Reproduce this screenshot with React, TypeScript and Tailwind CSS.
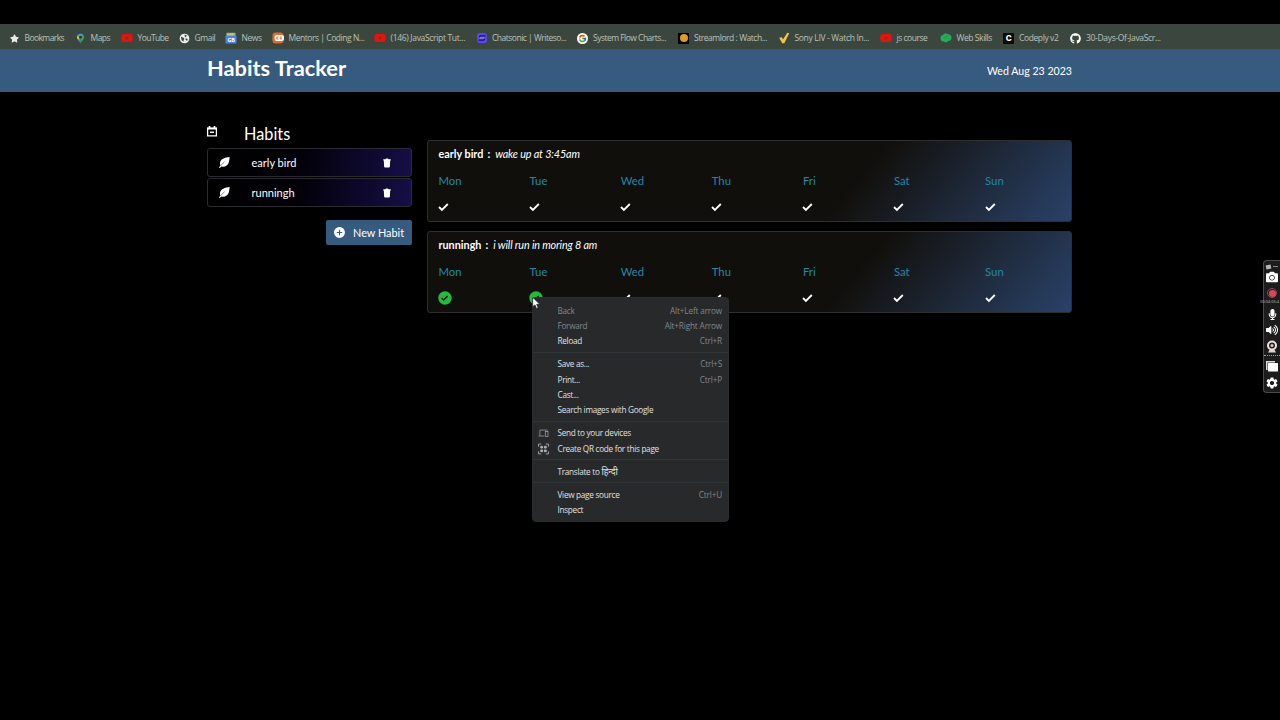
import type { ReactNode } from "react";
import { BiSolidCheckCircle, BiSolidPlusCircle } from "react-icons/bi";
import { FaGithub, FaStar, FaYoutube, FaCamera, FaMicrophone, FaVolumeUp } from "react-icons/fa";
import { FcGoogle } from "react-icons/fc";
import { MdSettings } from "react-icons/md";

const DAYS = ["Mon", "Tue", "Wed", "Thu", "Fri", "Sat", "Sun"];

const YT = <FaYoutube className="text-[#e8120c] text-[12px]" />;

const Globe = () => (
  <svg viewBox="0 0 12 12" className="w-[11px] h-[11px]">
    <circle cx="6" cy="6" r="5.3" fill="#eceeec" />
    <path d="M2 4 4.500 4.800 6 6.500 5 7.500 5 9.500 2.800 8zM6 2 8.500 2.400 8 3.800 6.600 4.500z M7 6 9.500 6.300 9 8.500 7.500 8z" fill="#3b473e" />
  </svg>
);

const MapsPin = () => (
  <svg viewBox="0 0 12 12" className="w-[11px] h-[11px]">
    <path d="M6 .8C3.700.8 2 2.500 2 4.700c0 2.600 2.600 3.600 4 6.700z" fill="#3d8be8" />
    <path d="M6 .8c2.300 0 4 1.700 4 3.900 0 2.600-2.700 3.700-4 6.700z" fill="#34a853" />
    <path d="M2.600 2.600 5 5 3.600 7.400 2.200 5.400z" fill="#fbbc04" />
    <path d="M6 .8 8.900 2 6 5 3 2.300z" fill="#5a93d8" />
    <circle cx="6" cy="4.600" r="1.500" fill="#26352c" />
  </svg>
);

const News = () => (
  <svg viewBox="0 0 12 12" className="w-[12px] h-[12px]">
    <rect x="1.500" y=".8" width="9" height="4" rx=".5" fill="#7cb7a4" />
    <path d="M2 2.300 8 1l2 3H2z" fill="#d8c06c" />
    <rect x=".5" y="3.500" width="11" height="8" rx=".8" fill="#4a84e4" />
    <text x="6" y="9.600" fontSize="5.500" fontWeight="700" textAnchor="middle" fill="#fff">GB</text>
  </svg>
);

const Ninjas = () => (
  <svg viewBox="0 0 12 12" className="w-[12px] h-[12px]">
    <rect x=".5" y=".5" width="11" height="11" rx="3" fill="#de6a2c" />
    <rect x="2.600" y="3" width="9.400" height="6" rx="2" fill="#fff" />
    <path d="M6.600 5H4.800v2h1.800M10 5H8.200v2H10" stroke="#de6a2c" strokeWidth=".9" fill="none" />
  </svg>
);

const Chatsonic = () => (
  <svg viewBox="0 0 12 12" className="w-[12px] h-[12px]">
    <rect x="1" y="1" width="10" height="10" rx="2.800" fill="#5b45f2" />
    <path d="M9.500 3.800H4.600c-1.400 0-1.400 2.200 0 2.200h2.800c1.400 0 1.400 2.200 0 2.200H2.500" stroke="#171455" strokeWidth="1.300" fill="none" />
    <path d="M3.500 6h5" stroke="#d8ccff" strokeWidth="1" />
  </svg>
);

const Google = () => (
  <span className="flex w-[11px] h-[11px] items-center justify-center rounded-full bg-white">
    <FcGoogle className="text-[9px]" />
  </span>
);

const Streamlord = () => (
  <span className="flex w-[11px] h-[11px] items-center justify-center bg-black">
    <span className="h-[8px] w-[8px] rounded-full bg-[#e0992f]" />
  </span>
);

const SonyLiv = () => (
  <svg viewBox="0 0 12 12" className="w-[12px] h-[12px]">
    <path d="M1.200 5.800 3.900 5.300 5 7.400 9.300.8 11.200 1.200 6.300 11.300H4.200z" fill="#f3c34a" />
  </svg>
);

const WebSkills = () => (
  <svg viewBox="0 0 12 12" className="w-[12px] h-[12px]">
    <path d="M3 2.900C4.500 1.200 7 1.400 8 2.300c2 0 3.600 1.600 3.500 3.500 0 2-1.400 3.300-3.300 3.300C7 10.700 4.700 10.600 3.700 9.500 1.500 9.500.4 8.200.5 6.200.5 4.400 1.400 3.200 3 2.900z" fill="#25ad58" />
    <path d="M3 5.500h3v2M6 3v1.500h3M8 6.500h2" stroke="#1d8b49" strokeWidth=".5" fill="none" />
  </svg>
);

const Codeply = () => (
  <span className="flex w-[11px] h-[11px] items-center justify-center bg-[#0b0b0b] font-['Inter',sans-serif] text-[8px] font-extrabold leading-none text-white">C</span>
);

type Bookmark = { label: string; icon: ReactNode; width: string; tracking: string };

const BOOKMARKS: Bookmark[] = [
  { label: "Bookmarks", icon: <FaStar className="text-[9px] text-[#e9ece9]" />, width: "w-[66px]", tracking: "tracking-[-0.58px]" },
  { label: "Maps", icon: <MapsPin />, width: "w-[47px]", tracking: "tracking-[-0.5px]" },
  { label: "YouTube", icon: YT, width: "w-[57px]", tracking: "tracking-[-0.55px]" },
  { label: "Gmail", icon: <Globe />, width: "w-[47px]", tracking: "tracking-[-0.45px]" },
  { label: "News", icon: <News />, width: "w-[47px]", tracking: "tracking-[-0.4px]" },
  { label: "Mentors | Coding N...", icon: <Ninjas />, width: "w-[102px]", tracking: "tracking-[-0.46px]" },
  { label: "(146) JavaScript Tut...", icon: YT, width: "w-[101.500px]", tracking: "tracking-[-0.33px]" },
  { label: "Chatsonic | Writeso...", icon: <Chatsonic />, width: "w-[101px]", tracking: "tracking-[-0.5px]" },
  { label: "System Flow Charts...", icon: <Google />, width: "w-[101px]", tracking: "tracking-[-0.52px]" },
  { label: "Streamlord : Watch...", icon: <Streamlord />, width: "w-[100.500px]", tracking: "tracking-[-0.46px]" },
  { label: "Sony LIV - Watch In...", icon: <SonyLiv />, width: "w-[102px]", tracking: "tracking-[-0.33px]" },
  { label: "js course", icon: YT, width: "w-[60px]", tracking: "tracking-[-0.48px]" },
  { label: "Web Skills", icon: <WebSkills />, width: "w-[62.500px]", tracking: "tracking-[-0.42px]" },
  { label: "Codeply v2", icon: <Codeply />, width: "w-[67px]", tracking: "tracking-[-0.4px]" },
  { label: "30-Days-Of-JavaScr...", icon: <FaGithub className="text-[11px] text-white" />, width: "w-[110px]", tracking: "tracking-[-0.32px]" },
];

const HABITS = [
  { name: "early bird", note: "wake up at 3:45am", done: [] as string[] },
  { name: "runningh", note: "i will run in moring 8 am", done: ["Mon", "Tue"] },
];

const CalendarIcon = () => (
  <svg viewBox="0 0 12 13" className="w-[12px] h-[13px]" fill="none" stroke="#fff">
    <path d="M1.600 3.200h8.800v7.600H1.600z" strokeWidth="1.300" />
    <path d="M1 3.600h10M3.500 1v2M8.500 1v2" strokeWidth="1.700" />
    <path d="M4 7.300h4" strokeWidth="1.500" />
  </svg>
);

const LeafIcon = () => (
  <svg viewBox="0 0 13 13" className="w-[13px] h-[13px]">
    <path d="M11.700 1C7.500 1.200 3.400 3 2.300 5.600 1.700 7.200 1.900 8.600 2.500 9.500L.9 11.600l.9.400 1.500-1.500c3.500.9 6.500-.9 7.500-4 .5-1.800.6-3.700.9-5.500z" fill="#fff" />
    <path d="M2.700 9.600 6.500 5.800" stroke="#08070c" strokeWidth=".5" />
  </svg>
);

const TrashIcon = () => (
  <svg viewBox="0 0 9 11" className="w-[8px] h-[10px]" fill="#fff">
    <path d="M.3 1.300H2.800L3.400.4H5.600L6.200 1.300H8.700V2.800H.3zM.9 2.800H8.100L7.700 9.600Q7.600 10.500 6.700 10.500H2.300Q1.400 10.500 1.300 9.600z" />
  </svg>
);

const CheckIcon = () => (
  <svg viewBox="0 0 11 10" className="-ml-[0.500px] w-[11px] h-[10px]" fill="none" stroke="#fff" strokeWidth="1.800">
    <path d="M1 5 3.900 7.900 9.800 2" />
  </svg>
);

const DevicesIcon = () => (
  <svg viewBox="0 0 12 10" className="w-[11px] h-[9px]" fill="none" stroke="#a7a9ac" strokeWidth=".8">
    <path d="M10.500 1.200H2V7.500M.5 7.800H7" />
    <rect x="8" y="2.800" width="3" height="5.600" />
  </svg>
);

const QrIcon = () => (
  <svg viewBox="0 0 12 12" className="w-[11px] h-[12px]" fill="none" stroke="#b4b6b9" strokeWidth=".9">
    <path d="M.6 3.500V.6H3.500M8.500.6h2.900V3.500M11.400 8.500v2.900H8.500M3.500 11.400H.6V8.500" />
    <path d="M3 3h2v2H3zM7 3h2v2H7zM3 7h2v2H3zM7 7h2v2H7z" fill="#b4b6b9" />
  </svg>
);

type MenuItem = { label: ReactNode; keys?: string; icon?: ReactNode; disabled?: boolean };

const MENU: MenuItem[][] = [
  [
    { label: "Back", keys: "Alt+Left arrow", disabled: true },
    { label: "Forward", keys: "Alt+Right Arrow", disabled: true },
    { label: "Reload", keys: "Ctrl+R" },
  ],
  [
    { label: "Save as...", keys: "Ctrl+S" },
    { label: "Print...", keys: "Ctrl+P" },
    { label: "Cast..." },
    { label: "Search images with Google" },
  ],
  [
    { label: "Send to your devices", icon: <DevicesIcon /> },
    { label: "Create QR code for this page", icon: <QrIcon /> },
  ],
  [{ label: <>Translate to <span className="text-[9px]">हिन्दी</span></> }],
  [{ label: "View page source", keys: "Ctrl+U" }, { label: "Inspect" }],
];

function BookmarksBar() {
  return (
    <div className="mt-6 flex h-[26px] items-center border-b border-[#45566a] bg-[#3b473e] pl-[8px] font-['Open_Sans',sans-serif] text-[8.500px] text-[#b9c0ba]">
      {BOOKMARKS.map((b) => (
        <div key={b.label} className={`flex shrink-0 items-center gap-[4.500px] whitespace-nowrap pt-[3px] ${b.width} ${b.tracking}`}>
          <span className="flex w-[12px] justify-center">{b.icon}</span>
          {b.label}
        </div>
      ))}
    </div>
  );
}

function HabitCard({ name, note, done }: (typeof HABITS)[number]) {
  return (
    <div className="h-[82px] rounded-[3px] border border-[#2f2f30] bg-[linear-gradient(130deg,#110f0b_0%,#110f0b_65%,#1c2431_79%,#294269_100%)] pl-[10.500px] pt-[5px]">
      <p className="text-[10.800px] leading-[16px] text-white">
        <b>{name}</b>
        <b className="ml-[4px] mr-[5px]">:</b>
        <i className="tracking-[-0.14px]">{note}</i>
      </p>
      <div className="mt-[10px] grid grid-cols-[repeat(7,91.1px)]">
        {DAYS.map((d) => (
          <div key={d}>
            <p className="text-[11.300px] leading-[17px] text-[#2089a8]">{d}</p>
            <div className="mt-[9px] flex h-[18px] items-center">
              {done.includes(d) ? (
                <BiSolidCheckCircle className="-ml-[1.500px] text-[16px] text-[#25b93f]" />
              ) : (
                <CheckIcon />
              )}
            </div>
          </div>
        ))}
      </div>
    </div>
  );
}

function ContextMenu() {
  return (
    <div className="absolute left-[532px] top-[297px] h-[225px] w-[197px] rounded-[4px] border border-[#2b2e30] bg-[#27292b] pt-[5.300px] font-['Open_Sans','Noto_Sans',sans-serif] text-[8.200px] tracking-[-0.28px]">
      {MENU.map((group, i) => (
        <div key={i} className={i > 0 ? "mt-[3px] border-t border-[#323537] pt-[3.700px]" : ""}>
          {group.map((item, j) => (
            <div key={j} className={`flex h-[15.3px] items-center pr-[6px] ${item.disabled ? "text-[#85878a]" : "text-[#e0e1e3]"}`}>
              <span className="flex w-[24.500px] justify-start pl-[5px]">{item.icon}</span>
              <span className="flex-1 whitespace-nowrap">{item.label}</span>
              <span className="tracking-[-0.15px] text-[#85878a]">{item.keys}</span>
            </div>
          ))}
        </div>
      ))}
    </div>
  );
}

function Recorder() {
  return (
    <div className="absolute left-[1263px] top-[260px] flex h-[133px] w-[17px] flex-col items-center rounded-l-[4px] border border-r-0 border-[#4a4a4a] bg-[#1c1c1c] text-white">
      <div className="mt-[2px] flex h-[7px] items-center gap-[2px]">
        <span className="h-[4px] w-[5px] -rotate-12 bg-[#b5b5b5]" />
        <span className="h-px w-[5px] bg-[#8a8a8a]" />
      </div>
      <FaCamera className="mt-px text-[12px]" />
      <span className="mt-[5px] flex h-[10px] w-[10px] items-center justify-center rounded-full border border-[#8d4d53]">
        <span className="h-[7px] w-[7px] rounded-full bg-[#d3495b]" />
      </span>
      <span className="-ml-[5px] mt-px h-[6px] whitespace-nowrap font-['Open_Sans',sans-serif] text-[4px] leading-[6px] text-[#bdbdbd]">00:04:05:4</span>
      <FaMicrophone className="mt-[4px] text-[11px]" />
      <FaVolumeUp className="mt-[4px] text-[12px]" />
      <svg viewBox="0 0 12 13" className="mt-[4px] h-[13px] w-[12px]">
        <path d="M2 12.500 4 9h4l2 3.500z" fill="#e0d2d0" />
        <circle cx="6" cy="5.500" r="5" fill="#e9e2e0" />
        <circle cx="6" cy="5.500" r="3" fill="#2a2222" />
        <circle cx="6" cy="5.500" r="1.500" fill="#d0c5c3" />
      </svg>
      <span className="mt-[2px] w-full border-t border-dotted border-[#a0a0a0]" />
      <svg viewBox="0 0 12 11" className="mt-[5px] h-[11px] w-[12px]">
        <path d="M0 0h9v1.500H1.500V9H0z" fill="#dcdcdc" />
        <rect x="2" y="2" width="10" height="8.500" rx=".6" fill="#fff" />
      </svg>
      <MdSettings className="mt-[4px] text-[14px]" />
    </div>
  );
}

export default function App() {
  return (
    <div className="relative h-[720px] w-[1280px] overflow-hidden bg-black font-['Lato',sans-serif] text-white">
      <BookmarksBar />
      <header className="flex h-[42px] items-center justify-between border-b border-[#45566a] bg-[#375b7f] pl-[207px] pr-[208px]">
        <h1 className="pb-[5px] text-[21.800px] font-bold leading-none">Habits Tracker</h1>
        <span className="pt-[3px] text-[10.600px]">Wed Aug 23 2023</span>
      </header>

      <main className="flex gap-[15px] pl-[207px]">
        <aside className="flex w-[205px] flex-col pt-[32px]">
          <div className="flex h-[19px] items-center">
            <div className="-ml-px mb-[4px]">
              <CalendarIcon />
            </div>
            <h2 className="ml-[26px] pt-px text-[16.300px] leading-none">Habits</h2>
          </div>
          <ul className="mt-[5px] flex flex-col gap-px">
            {HABITS.map((h) => (
              <li key={h.name} className="flex h-[29px] items-center rounded-[3px] border border-[#2c2c30] bg-[linear-gradient(100deg,#000_0%,#020108_45%,#160e48_100%)] pl-[10px] pr-[20px] text-[11px]">
                <LeafIcon />
                <span className="ml-[20.500px] flex-1 pt-[2px]">{h.name}</span>
                <TrashIcon />
              </li>
            ))}
          </ul>
          <button className="mt-[13px] flex h-[25px] w-[86px] items-center gap-[7px] self-end rounded-[2px] bg-[#375b7f] pl-[7px] text-[10.900px] whitespace-nowrap">
            <BiSolidPlusCircle className="text-[13px]" />
            <span className="pt-[2px]">New Habit</span>
          </button>
        </aside>

        <section className="mt-[47.500px] flex w-[645px] flex-col gap-[9px]">
          {HABITS.map((h) => (
            <HabitCard key={h.name} {...h} />
          ))}
        </section>
      </main>

      <ContextMenu />
      <svg viewBox="0 0 10 14" className="absolute left-[532px] top-[296px] h-[14px] w-[9px]">
        <path d="M.8.8v10.500l2.500-2.300 1.700 4 1.800-.8-1.700-3.800h3.500z" fill="#fff" stroke="#111" strokeWidth=".6" />
      </svg>
      <Recorder />
    </div>
  );
}
